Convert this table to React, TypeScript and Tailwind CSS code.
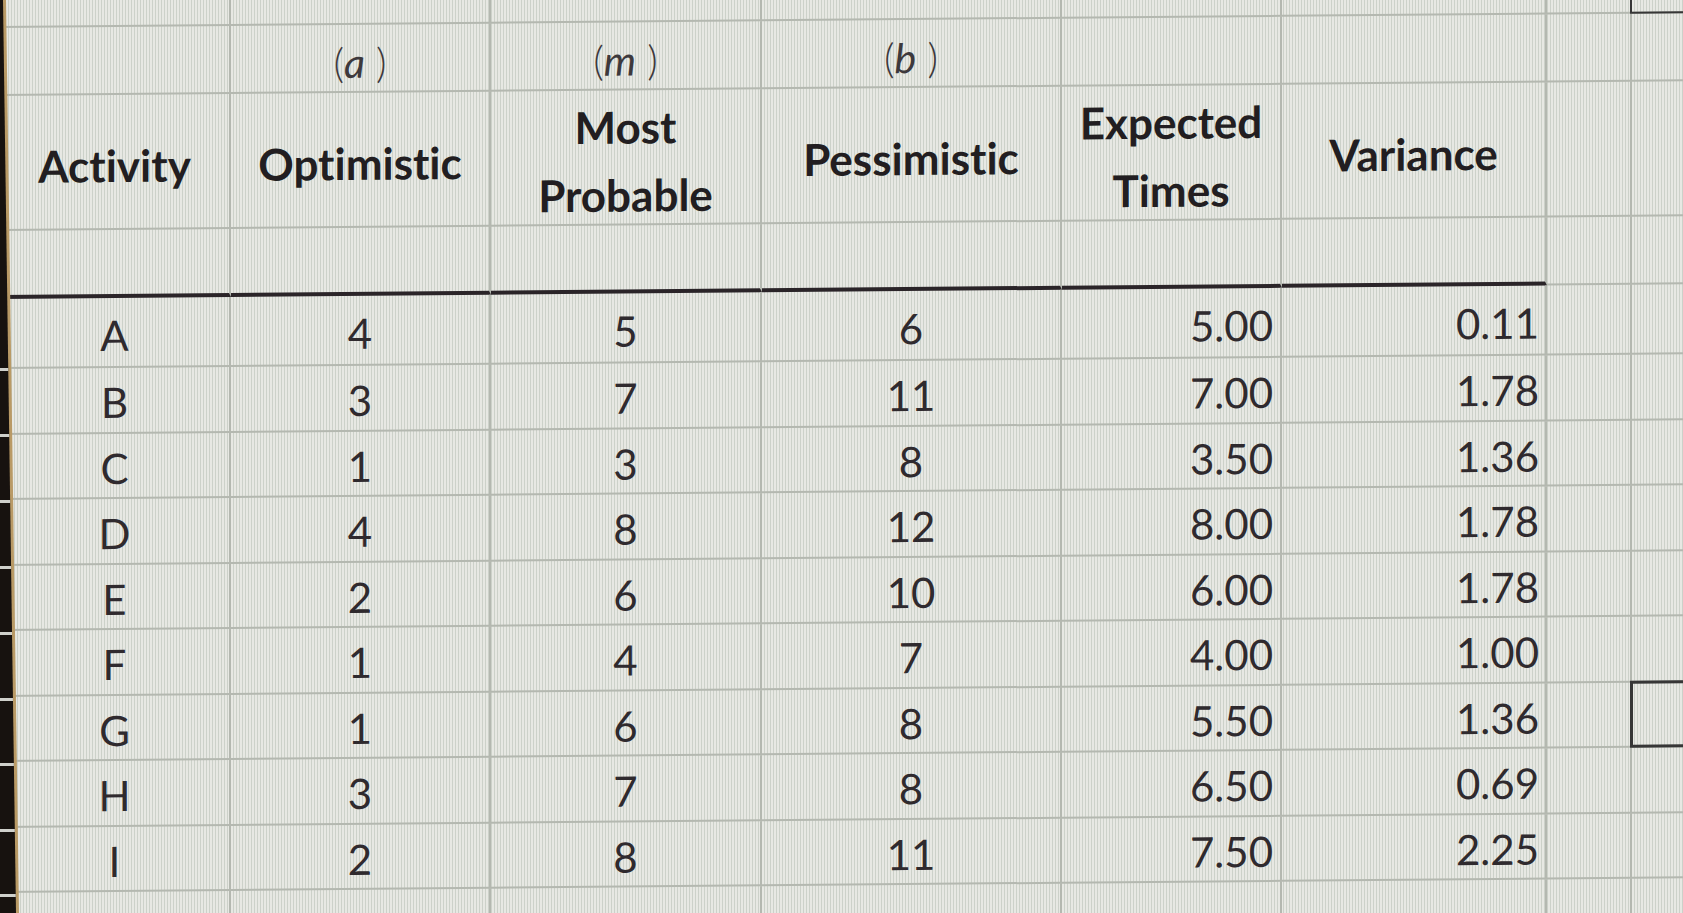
import React from 'react'

const colW = [
  'w-[231px]',
  'w-[260px]',
  'w-[271px]',
  'w-[300px]',
  'w-[220px]',
  'w-[265px]',
  'w-[85px]',
  'w-[240px]',
]

const grid = 'border-[#b4b8b0]'

const data = [
  ['A', '4', '5', '6', '5.00', '0.11'],
  ['B', '3', '7', '11', '7.00', '1.78'],
  ['C', '1', '3', '8', '3.50', '1.36'],
  ['D', '4', '8', '12', '8.00', '1.78'],
  ['E', '2', '6', '10', '6.00', '1.78'],
  ['F', '1', '4', '7', '4.00', '1.00'],
  ['G', '1', '6', '8', '5.50', '1.36'],
  ['H', '3', '7', '8', '6.50', '0.69'],
  ['I', '2', '8', '11', '7.50', '2.25'],
]

const rowH = [
  'h-[70px]',
  'h-[65.5px]',
  'h-[65.5px]',
  'h-[65.5px]',
  'h-[65.5px]',
  'h-[65.5px]',
  'h-[65.5px]',
  'h-[65.5px]',
  'h-[65.5px]',
]

const ticks = [368, 434, 500, 566, 632, 698, 763, 829, 894]

function Cell({ i, className = '', children }: { i: number; className?: string; children?: React.ReactNode }) {
  return (
    <div className={`${colW[i]} shrink-0 h-full border-r-2 border-b-2 ${grid} ${className}`}>
      {children}
    </div>
  )
}

function Paren({ v }: { v: string }) {
  return (
    <span className="text-[41px] leading-none text-[#3d393c] font-light">
      (<i className="font-normal">{v}</i> )
    </span>
  )
}

export default function App() {
  return (
    <div className="relative w-[1683px] h-[913px] overflow-hidden bg-[repeating-linear-gradient(90deg,#e7e8e3_0px,#e7e8e3_2px,#ccd1c9_2px,#ccd1c9_3px)] font-['Lato',sans-serif] [font-variant-ligatures:none] text-[#2f2a2e]">
      <div className="origin-top-left -skew-y-[0.5deg] flex flex-col w-[1832px]">
        {/* top empty row */}
        <div className="flex h-[28px]">
          {colW.map((_, i) => (
            <Cell key={i} i={i} className="relative">
              {i === 7 && <div className="absolute -left-[2px] -top-[40px] -bottom-[2px] right-0 border-2 border-[#363636]" />}
            </Cell>
          ))}
        </div>

        {/* letter row */}
        <div className="flex h-[68px]">
          <Cell i={0} />
          <Cell i={1} className="flex items-end justify-center pb-[8px]"><Paren v="a" /></Cell>
          <Cell i={2} className="flex items-end justify-center pb-[8px]"><Paren v="m" /></Cell>
          <Cell i={3} className="flex items-end justify-center pb-[8px]"><Paren v="b" /></Cell>
          <Cell i={4} />
          <Cell i={5} />
          <Cell i={6} />
          <Cell i={7} />
        </div>

        {/* titles */}
        <div className="flex h-[135px] text-[44px] font-bold text-[#221e21]">
          <Cell i={0} className="flex items-center justify-center pt-[7px] leading-none">Activity</Cell>
          <Cell i={1} className="flex items-center justify-center pt-[7px] leading-none">Optimistic</Cell>
          <Cell i={2} className="flex flex-col items-center justify-center pt-[7px] leading-[68px]">
            <span>Most</span>
            <span>Probable</span>
          </Cell>
          <Cell i={3} className="flex items-center justify-center pt-[7px] leading-none">Pessimistic</Cell>
          <Cell i={4} className="flex flex-col items-center justify-center pt-[7px] leading-[68px]">
            <span>Expected</span>
            <span>Times</span>
          </Cell>
          <Cell i={5} className="flex items-center justify-center pt-[7px] leading-none">Variance</Cell>
          <Cell i={6} />
          <Cell i={7} />
        </div>

        {/* spacer row with heavy rule */}
        <div className="flex h-[68px]">
          {colW.map((_, i) => (
            <Cell key={i} i={i} className={i < 6 ? 'border-b-4 !border-b-[#2a2428]' : ''} />
          ))}
        </div>

        {data.map((r, ri) => (
          <div key={r[0]} className={`flex ${rowH[ri]} text-[42px] leading-none`}>
            <Cell i={0} className="flex items-center justify-center pt-[5px]">{r[0]}</Cell>
            <Cell i={1} className="flex items-center justify-center pt-[5px]">{r[1]}</Cell>
            <Cell i={2} className="flex items-center justify-center pt-[5px]">{r[2]}</Cell>
            <Cell i={3} className="flex items-center justify-center pt-[5px]">{r[3]}</Cell>
            <Cell i={4} className="flex items-center justify-end pt-[5px] pr-[7px]">{r[4]}</Cell>
            <Cell i={5} className="flex items-center justify-end pt-[5px] pr-[6px]">{r[5]}</Cell>
            <Cell i={6} />
            <Cell i={7} className="relative">
              {r[0] === 'G' && <div className="absolute -left-[2px] -top-[2px] -bottom-[2px] right-0 border-[3px] border-[#363636]" />}
            </Cell>
          </div>
        ))}

        {[0, 1].map((k) => (
          <div key={k} className="flex h-[65.5px]">
            {colW.map((_, i) => (
              <Cell key={i} i={i} />
            ))}
          </div>
        ))}
      </div>

      {/* monitor bezel on the left edge */}
      <div className="absolute left-0 top-0 h-full w-[22px] bg-[#b99a66] [clip-path:polygon(0_0,6px_0,19px_100%,0_100%)]" />
      <div className="absolute left-0 top-0 h-full w-[22px] bg-[#17120f] [clip-path:polygon(0_0,3px_0,16px_100%,0_100%)]">
        {ticks.map((t) => (
          <div key={t} className="h-[3px] w-full bg-[#cfd0cb] absolute left-0" style={{ top: t }} />
        ))}
      </div>
    </div>
  )
}
